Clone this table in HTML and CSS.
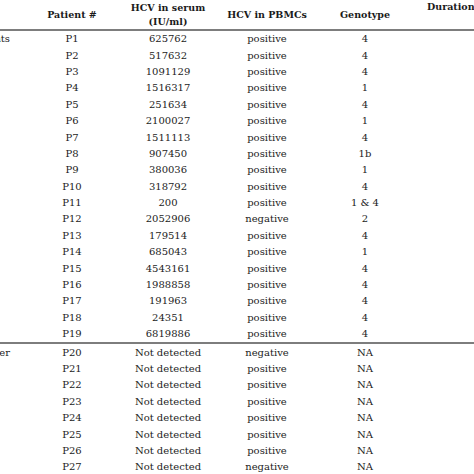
FILE: index.html
```html
<!DOCTYPE html>
<html>
<head>
<meta charset="utf-8">
<link rel="stylesheet" href="styles.css">
</head>
<body>
<table class="data">
  <colgroup>
    <col class="c-group"><col class="c-pat"><col class="c-serum"><col class="c-pbmc"><col class="c-geno"><col class="c-dur">
  </colgroup>
  <thead>
    <tr>
      <th class="grp"></th>
      <th>Patient #</th>
      <th>HCV in serum<br>(IU/ml)</th>
      <th>HCV in PBMCs</th>
      <th>Genotype</th>
      <th class="dur">Duration</th>
    </tr>
  </thead>
  <tbody>
    <tr><td class="grp">Patients</td><td>P1</td><td>625762</td><td>positive</td><td>4</td><td></td></tr>
    <tr><td class="grp"></td><td>P2</td><td>517632</td><td>positive</td><td>4</td><td></td></tr>
    <tr><td class="grp"></td><td>P3</td><td>1091129</td><td>positive</td><td>4</td><td></td></tr>
    <tr><td class="grp"></td><td>P4</td><td>1516317</td><td>positive</td><td>1</td><td></td></tr>
    <tr><td class="grp"></td><td>P5</td><td>251634</td><td>positive</td><td>4</td><td></td></tr>
    <tr><td class="grp"></td><td>P6</td><td>2100027</td><td>positive</td><td>1</td><td></td></tr>
    <tr><td class="grp"></td><td>P7</td><td>1511113</td><td>positive</td><td>4</td><td></td></tr>
    <tr><td class="grp"></td><td>P8</td><td>907450</td><td>positive</td><td>1b</td><td></td></tr>
    <tr><td class="grp"></td><td>P9</td><td>380036</td><td>positive</td><td>1</td><td></td></tr>
    <tr><td class="grp"></td><td>P10</td><td>318792</td><td>positive</td><td>4</td><td></td></tr>
    <tr><td class="grp"></td><td>P11</td><td>200</td><td>positive</td><td>1 &amp; 4</td><td></td></tr>
    <tr><td class="grp"></td><td>P12</td><td>2052906</td><td>negative</td><td>2</td><td></td></tr>
    <tr><td class="grp"></td><td>P13</td><td>179514</td><td>positive</td><td>4</td><td></td></tr>
    <tr><td class="grp"></td><td>P14</td><td>685043</td><td>positive</td><td>1</td><td></td></tr>
    <tr><td class="grp"></td><td>P15</td><td>4543161</td><td>positive</td><td>4</td><td></td></tr>
    <tr><td class="grp"></td><td>P16</td><td>1988858</td><td>positive</td><td>4</td><td></td></tr>
    <tr><td class="grp"></td><td>P17</td><td>191963</td><td>positive</td><td>4</td><td></td></tr>
    <tr><td class="grp"></td><td>P18</td><td>24351</td><td>positive</td><td>4</td><td></td></tr>
    <tr><td class="grp"></td><td>P19</td><td>6819886</td><td>positive</td><td>4</td><td></td></tr>
  </tbody>
  <tbody class="section">
    <tr><td class="grp">Controller</td><td>P20</td><td>Not detected</td><td>negative</td><td>NA</td><td></td></tr>
    <tr><td class="grp"></td><td>P21</td><td>Not detected</td><td>positive</td><td>NA</td><td></td></tr>
    <tr><td class="grp"></td><td>P22</td><td>Not detected</td><td>positive</td><td>NA</td><td></td></tr>
    <tr><td class="grp"></td><td>P23</td><td>Not detected</td><td>positive</td><td>NA</td><td></td></tr>
    <tr><td class="grp"></td><td>P24</td><td>Not detected</td><td>positive</td><td>NA</td><td></td></tr>
    <tr><td class="grp"></td><td>P25</td><td>Not detected</td><td>positive</td><td>NA</td><td></td></tr>
    <tr><td class="grp"></td><td>P26</td><td>Not detected</td><td>positive</td><td>NA</td><td></td></tr>
    <tr><td class="grp"></td><td>P27</td><td>Not detected</td><td>negative</td><td>NA</td><td></td></tr>
  </tbody>
</table>
</body>
</html>
```
FILE: styles.css
```css
html, body {
  margin: 0;
  padding: 0;
  background: #ffffff;
  overflow: hidden;
}
body {
  width: 474px;
  height: 474px;
}
.data {
  border-collapse: separate;
  border-spacing: 0;
  table-layout: fixed;
  width: 580px;
  margin-left: -50px;
  font-family: "DejaVu Serif", "Liberation Serif", serif;
  font-size: 10px;
  color: #1c1c1c;
}
.c-group { width: 72px; }
.c-pat { width: 100px; }
.c-serum { width: 92px; }
.c-pbmc { width: 106px; }
.c-geno { width: 90px; }
.c-dur { width: 120px; }

.data th, .data td {
  padding: 0;
  text-align: center;
  white-space: nowrap;
}
.data th {
  height: 29px;
  font-size: 9.5px;
  font-weight: bold;
  line-height: 14px;
  vertical-align: middle;
  border-bottom: 2px solid #7d7d7d;
  color: #1a1a1a;
}
.data th.dur {
  vertical-align: top;
  text-align: left;
  padding-left: 17px;
}
.data td {
  height: 16.4px;
  line-height: 16px;
  vertical-align: middle;
}
.data .grp {
  text-align: right;
  padding-right: 12px;
}
.section tr:first-child td {
  border-top: 2px solid #7d7d7d;
}
```
